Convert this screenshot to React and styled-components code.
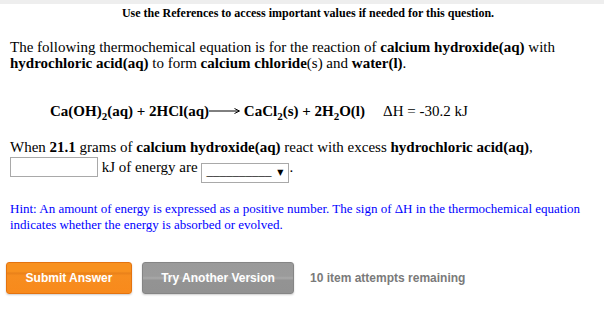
import styled, { createGlobalStyle } from "styled-components";

const GlobalStyle = createGlobalStyle`
  body {
    margin: 0;
    background: #fff;
    font-family: "Liberation Serif", "Times New Roman", serif;
    color: #000;
  }
`;

function LongArrow() {
  return (
    <ArrowSvg width="31" height="8" viewBox="0 0 31 8">
      <line x1="0" y1="4" x2="30" y2="4" stroke="#000" strokeWidth="1" />
      <path d="M25.5 1.5 L30.5 4 L25.5 6.5" fill="none" stroke="#000" strokeWidth="1" />
    </ArrowSvg>
  );
}

export default function App() {
  return (
    <>
      <GlobalStyle />
      <Page>
        <Notice>Use the References to access important values if needed for this question.</Notice>
        <Content>
          <Para>
            The following thermochemical equation is for the reaction of <b>calcium hydroxide(aq)</b> with{" "}
            <b>hydrochloric acid(aq)</b> to form <b>calcium chloride</b>(s) and <b>water(l)</b>.
          </Para>
          <Equation>
            <b>
              Ca(OH)<sub>2</sub>(aq) + 2HCl(aq)
              <LongArrow /> CaCl<sub>2</sub>(s) + 2H<sub>2</sub>O(l)
            </b>
            <Delta>ΔH = -30.2 kJ</Delta>
          </Equation>
          <Prompt>
            When <b>21.1</b> grams of <b>calcium hydroxide(aq)</b> react with excess <b>hydrochloric acid(aq)</b>,
            <br />
            <AnswerInput /> kJ of energy are{" "}
            <Select>
              <Blank>__________</Blank>
              <Caret>▼</Caret>
            </Select>
            .
          </Prompt>
          <Hint>
            Hint: An amount of energy is expressed as a positive number. The sign of ΔH in the thermochemical
            equation indicates whether the energy is absorbed or evolved.
          </Hint>
        </Content>
        <Actions>
          <Button $variant="primary" $width={126}>
            Submit Answer
          </Button>
          <Button $width={152}>Try Another Version</Button>
          <Attempts>10 item attempts remaining</Attempts>
        </Actions>
      </Page>
    </>
  );
}

const Page = styled.div`
  border-top: 4px solid #eeeeee;
  width: 604px;
  height: 326px;
`;

const Notice = styled.div`
  padding: 2px 0 0 12px;
  text-align: center;
  font-weight: bold;
  font-size: 12px;
  line-height: 14px;
`;

const Content = styled.div`
  padding: 0 8px 0 10px;
`;

const Para = styled.p`
  margin: 19px 0 0;
  font-size: 15px;
  line-height: 16px;
`;

const Equation = styled.div`
  display: flex;
  align-items: baseline;
  gap: 18px;
  margin: 30px 0 0 40px;
  font-size: 15px;
  line-height: 20px;

  sub {
    font-size: 11px;
    vertical-align: -4px;
    line-height: 0;
  }
`;

const ArrowSvg = styled.svg`
  vertical-align: 1px;
`;

const Delta = styled.span`
  font-weight: normal;
`;

const Prompt = styled.p`
  margin: 17px 0 0;
  font-size: 15px;
  line-height: 19px;
`;

const AnswerInput = styled.span`
  display: inline-block;
  box-sizing: border-box;
  width: 88px;
  height: 20px;
  border: 1px solid #a9a9a9;
  vertical-align: -5px;
`;

const Select = styled.span`
  display: inline-flex;
  box-sizing: border-box;
  align-items: center;
  justify-content: space-between;
  width: 88px;
  height: 20px;
  padding: 0 5px 0 4px;
  border: 1px solid #a9a9a9;
  vertical-align: -5px;
  font-size: 13px;
  line-height: 16px;
`;

const Blank = styled.span`
  position: relative;
  top: -2px;
`;

const Caret = styled.span`
  font-family: "DejaVu Sans", sans-serif;
  font-size: 8px;
`;

const Hint = styled.div`
  margin-top: 18px;
  color: #0000ff;
  font-size: 13px;
  line-height: 16px;
`;

const Actions = styled.div`
  display: flex;
  align-items: center;
  margin-top: 29px;
  padding-left: 6px;
  font-family: "Liberation Sans", Arial, sans-serif;
`;

const Button = styled.div`
  box-sizing: border-box;
  width: ${(p) => p.$width}px;
  height: 32px;
  margin-right: ${(p) => (p.$variant === "primary" ? 10 : 16)}px;
  display: flex;
  align-items: center;
  justify-content: center;
  white-space: nowrap;
  border-radius: 3px;
  font-size: 12px;
  font-weight: bold;
  color: #fff;
  border: 1px solid ${(p) => (p.$variant === "primary" ? "#e4730f" : "#858585")};
  background: ${(p) =>
    p.$variant === "primary"
      ? "linear-gradient(#f8911f 0%, #f8911f 28%, #e9811a 34%, #f78d1f 42%, #f88a1c 100%)"
      : "linear-gradient(#9a9a9a 0%, #9b9b9b 44%, #a9a9a9 50%, #939393 58%, #929292 100%)"};
  box-shadow: 0 1px 2px rgba(0, 0, 0, 0.2);
`;

const Attempts = styled.span`
  white-space: nowrap;
  font-size: 12px;
  font-weight: bold;
  color: #7a7a7a;
`;
